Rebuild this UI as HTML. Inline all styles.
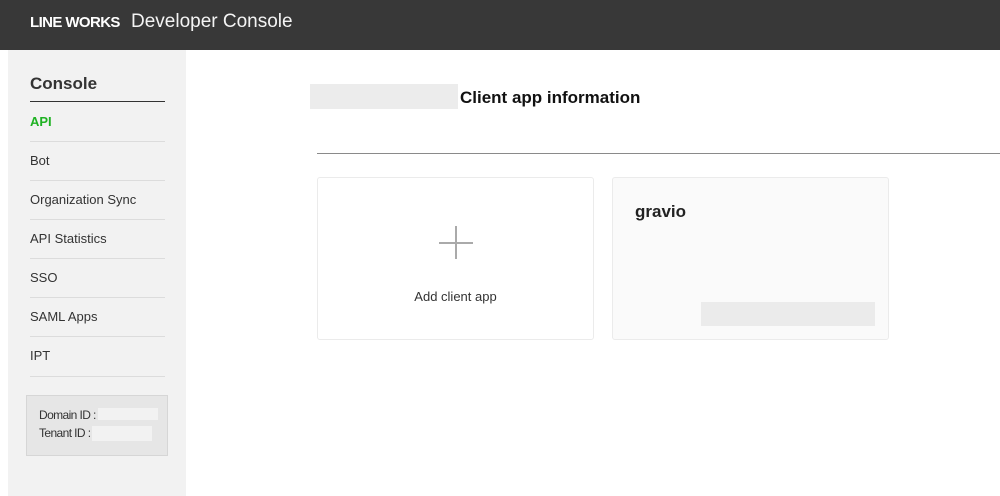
<!DOCTYPE html>
<html><head><meta charset="utf-8"><style>
*{margin:0;padding:0;box-sizing:border-box}
body{width:1000px;height:496px;overflow:hidden;background:#fff;font-family:"Liberation Sans",sans-serif;position:relative;color:#222}
.hdr{position:absolute;left:0;top:0;width:1000px;height:50px;background:#383838;color:#fff}
.hdr .b{position:absolute;left:30px;top:14px;font-size:15px;font-weight:bold;letter-spacing:-0.6px}
.hdr .d{position:absolute;left:131px;top:11px;font-size:19px;color:#f4f4f4}
.side{position:absolute;left:8px;top:50px;width:178px;height:446px;background:#f2f2f2}
.ab{position:absolute}
.con{left:30px;top:74px;font-size:17px;font-weight:bold;color:#333}
.ul{left:30px;top:101px;width:135px;height:1px;background:#333}
.it{left:30px;font-size:13px;color:#333}
.sep{left:30px;width:135px;height:1px;background:#dcdcdc}
.box{left:26px;top:395px;width:142px;height:61px;background:#e6e6e6;border:1px solid #d6d6d6}
.box div{position:absolute;left:12px;font-size:12px;color:#333;letter-spacing:-0.6px}
.w{position:absolute;background:#f2f2f2}
.card{position:absolute;top:177px;width:277px;height:163px;border:1px solid #ebebeb;border-radius:3px}
</style></head><body>
<div class="hdr"><div class="b">LINE WORKS</div><div class="d">Developer Console</div></div>
<div class="side"></div>
<div class="ab con">Console</div>
<div class="ab ul"></div>
<div class="ab it" style="top:114px;color:#1fb223;font-weight:bold">API</div>
<div class="ab sep" style="top:141px"></div>
<div class="ab it" style="top:153px">Bot</div>
<div class="ab sep" style="top:180px"></div>
<div class="ab it" style="top:192px">Organization Sync</div>
<div class="ab sep" style="top:219px"></div>
<div class="ab it" style="top:231px">API Statistics</div>
<div class="ab sep" style="top:258px"></div>
<div class="ab it" style="top:270px">SSO</div>
<div class="ab sep" style="top:297px"></div>
<div class="ab it" style="top:309px">SAML Apps</div>
<div class="ab sep" style="top:336px"></div>
<div class="ab it" style="top:348px">IPT</div>
<div class="ab sep" style="top:376px"></div>
<div class="ab box"><div style="top:12px">Domain ID :</div><div style="top:30px">Tenant ID :</div>
<span class="w" style="left:71px;top:12px;width:60px;height:12px"></span>
<span class="w" style="left:65px;top:30px;width:60px;height:15px"></span></div>
<div class="ab" style="left:310px;top:84px;width:148px;height:25px;background:#ececec"></div>
<div class="ab" style="left:460px;top:88px;font-size:17px;font-weight:bold;color:#111">Client app information</div>
<div class="ab" style="left:317px;top:153px;width:683px;height:1px;background:#8a8a8a"></div>
<div class="card" style="left:317px;background:#fff">
<div class="ab" style="left:137px;top:48px;width:2px;height:33px;background:#aaa"></div>
<div class="ab" style="left:121px;top:64px;width:34px;height:2px;background:#aaa"></div>
<div class="ab" style="left:0;width:275px;top:111px;text-align:center;font-size:13px;color:#333">Add client app</div>
</div>
<div class="card" style="left:612px;background:#fafafa">
<div class="ab" style="left:22px;top:24px;font-size:17px;font-weight:bold;color:#222">gravio</div>
<div class="ab" style="left:88px;top:124px;width:174px;height:24px;background:#ebebeb"></div>
</div>
</body></html>
